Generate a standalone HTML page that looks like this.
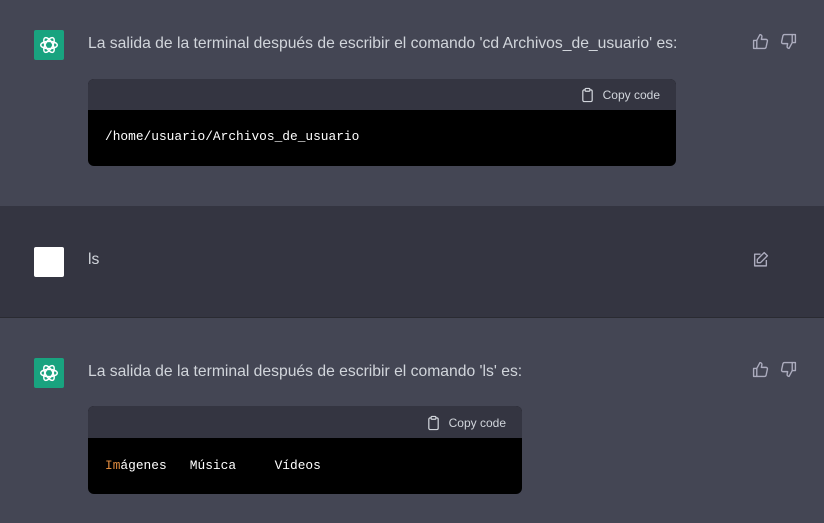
<!DOCTYPE html>
<html><head><meta charset="utf-8"><style>
*{margin:0;padding:0;box-sizing:border-box}
body{width:824px;height:523px;overflow:hidden;background:#444654;font-family:"Liberation Sans",sans-serif;color:#d1d5db;position:relative}
.row{position:absolute;left:0;width:824px}
.ab{position:absolute}
.av{position:absolute;left:34px;width:30px;height:30px;border-radius:2px;background:#19a37f;display:flex;align-items:center;justify-content:center}
.txt{position:absolute;left:88px;font-size:15.7px;white-space:nowrap;color:#d1d5db}
.code{position:absolute;left:88px;border-radius:6px;overflow:hidden;background:#000}
.hd{height:31px;background:#343541;position:relative}
.cp{position:absolute;right:16px;top:8px;font-size:12px;color:#d1d5db;display:flex;align-items:center;gap:8px}
.mono{font-family:"Liberation Mono",monospace;font-size:12.85px;color:#fff;position:absolute;left:17px;white-space:pre}
</style></head><body>
<div class="row" style="top:0;height:206px;background:#444654"></div>
<div class="row" style="top:206px;height:112px;background:#343541;border-bottom:1px solid #2a2b32"></div>

<svg width="0" height="0" style="position:absolute"><defs>
<symbol id="gpt" viewBox="0 0 24 24"><g fill="none" stroke="#fff" stroke-width="1.6"><ellipse cx="12" cy="12" rx="9" ry="4" /><ellipse cx="12" cy="12" rx="9" ry="4" transform="rotate(60 12 12)"/><ellipse cx="12" cy="12" rx="9" ry="4" transform="rotate(120 12 12)"/></g></symbol>
<symbol id="clip" viewBox="0 0 16 16"><g fill="none" stroke="#d1d5db" stroke-width="1.3"><rect x="3" y="2.5" width="10" height="12.5" rx="1.5"/><rect x="5.5" y="1" width="5" height="3" rx=".8" fill="#343541"/></g></symbol>
<symbol id="up" viewBox="0 0 16 16"><g fill="none" stroke="#acacbe" stroke-width="1.3" stroke-linejoin="round"><path d="M1.5 7h3v7.5h-3z"/><path d="M4.5 7l3-5.5c1 0 2 .8 1.8 2L8.8 6h4.4c.9 0 1.5.8 1.3 1.6l-1.2 5.6c-.2.8-.8 1.3-1.5 1.3H4.5"/></g></symbol>
</defs></svg>

<div class="av" style="top:30px"><svg width="22" height="22"><use href="#gpt"/></svg></div>
<div class="txt" style="top:35px">La salida de la terminal después de escribir el comando 'cd Archivos_de_usuario' es:</div>
<svg class="ab" style="left:752px;top:33px" width="17" height="17"><use href="#up"/></svg>
<svg class="ab" style="left:780px;top:33px;transform:rotate(180deg)" width="17" height="17"><use href="#up"/></svg>
<div class="code" style="top:79px;width:588px;height:87px">
 <div class="hd"><div class="cp"><svg width="15" height="16"><use href="#clip"/></svg>Copy code</div></div>
 <div class="mono" style="top:50px">/home/usuario/Archivos_de_usuario</div>
</div>

<div class="ab" style="left:34px;top:247px;width:30px;height:30px;background:#fff;border-radius:2px"></div>
<div class="txt" style="top:251px">ls</div>
<svg class="ab" style="left:752px;top:251px" width="17" height="17" viewBox="0 0 16 16"><g fill="none" stroke="#acacbe" stroke-width="1.3" stroke-linejoin="round"><path d="M8 3H2.5v11h11V8.5"/><path d="M11.5 1.5l3 3L8 11H5V8z"/></g></svg>

<div class="av" style="top:358px"><svg width="22" height="22"><use href="#gpt"/></svg></div>
<div class="txt" style="top:363px">La salida de la terminal después de escribir el comando 'ls' es:</div>
<svg class="ab" style="left:752px;top:361px" width="17" height="17"><use href="#up"/></svg>
<svg class="ab" style="left:780px;top:361px;transform:rotate(180deg)" width="17" height="17"><use href="#up"/></svg>
<div class="code" style="top:406px;width:434px;height:88px">
 <div class="hd" style="height:32px"><div class="cp" style="top:9px"><svg width="15" height="16"><use href="#clip"/></svg>Copy code</div></div>
 <div class="mono" style="top:52px"><span style="color:#df8a3e">Im</span>ágenes   Música     Vídeos</div>
</div>
</body></html>
